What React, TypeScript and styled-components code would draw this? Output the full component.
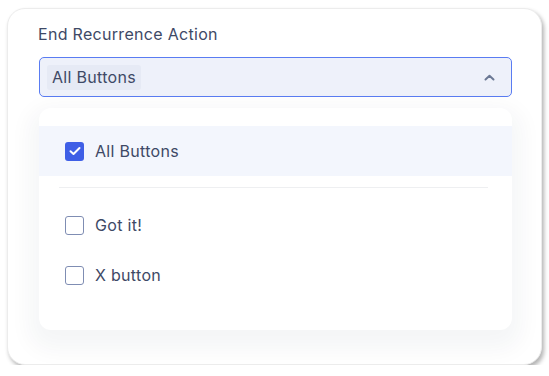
import React from "react";
import styled, { createGlobalStyle } from "styled-components";

const Global = createGlobalStyle`
  html, body { margin: 0; padding: 0; background: #ffffff; }
  body { font-family: "Inter", "Liberation Sans", sans-serif; }
`;

const Page = styled.div`
  padding: 8px 7px 0 7px;
`;

const Card = styled.div`
  box-sizing: border-box;
  width: 535px;
  height: 357px;
  background: #ffffff;
  border-radius: 18px;
  border: 1px solid #ececec;
  box-shadow: 2px 3px 4px rgba(0, 0, 0, 0.3);
  padding: 15px 29px 0 30px;
  display: flex;
  flex-direction: column;
`;

const Label = styled.div`
  font-size: 16px;
  line-height: 20px;
  color: #3e4966;
  letter-spacing: 0.3px;
`;

const Select = styled.div`
  box-sizing: border-box;
  margin-top: 13px;
  margin-left: 1px;
  height: 40px;
  border: 1px solid #5a7cf2;
  border-radius: 5px;
  background: #eef1fa;
  display: flex;
  align-items: center;
  justify-content: space-between;
  padding: 0 16px 0 7px;
`;

const Tag = styled.span`
  background: #e6eaf5;
  border-radius: 3px;
  padding: 3px 5px;
  font-size: 16px;
  line-height: 19px;
  letter-spacing: 0.3px;
  color: #3e4966;
`;

const Menu = styled.div`
  margin-top: 11px;
  margin-left: 1px;
  background: #ffffff;
  border-radius: 12px;
  box-shadow: 0 10px 22px 10px rgba(30, 40, 70, 0.045);
  padding: 18px 0 30px 0;
  display: flex;
  flex-direction: column;
`;

const Option = styled.div<{ $active?: boolean }>`
  height: 50px;
  display: flex;
  align-items: center;
  gap: 11px;
  padding-left: 26px;
  background: ${(p) => (p.$active ? "#f3f6fd" : "transparent")};
  font-size: 16px;
  letter-spacing: 0.3px;
  color: #3e4966;
`;

const Box = styled.span<{ $checked?: boolean }>`
  box-sizing: border-box;
  width: 19px;
  height: 19px;
  border-radius: 3px;
  border: ${(p) => (p.$checked ? "none" : "1.5px solid #7f8db3")};
  background: ${(p) => (p.$checked ? "#3f5fe6" : "#ffffff")};
  display: flex;
  align-items: center;
  justify-content: center;
`;

const Divider = styled.div`
  height: 1px;
  background: #eeeff1;
  margin: 11px 24px 12px 20px;
`;

const Check = () => (
  <svg width="12" height="10" viewBox="0 0 12 10" fill="none">
    <path d="M1.5 5.2 L4.5 8 L10.5 2" stroke="#ffffff" strokeWidth="2" strokeLinecap="round" strokeLinejoin="round" />
  </svg>
);

const Chevron = () => (
  <svg width="11" height="7" viewBox="0 0 11 7" fill="none">
    <path d="M1.5 5.5 L5.5 1.8 L9.5 5.5" stroke="#6b7894" strokeWidth="2" strokeLinecap="round" strokeLinejoin="round" />
  </svg>
);

const options = [
  { label: "Got it!", checked: false },
  { label: "X button", checked: false },
];

export default function App() {
  return (
    <>
      <Global />
      <Page>
        <Card>
          <Label>End Recurrence Action</Label>
          <Select>
            <Tag>All Buttons</Tag>
            <Chevron />
          </Select>
          <Menu>
            <Option $active>
              <Box $checked>
                <Check />
              </Box>
              All Buttons
            </Option>
            <Divider />
            {options.map((o) => (
              <Option key={o.label}>
                <Box $checked={o.checked} />
                {o.label}
              </Option>
            ))}
          </Menu>
        </Card>
      </Page>
    </>
  );
}
